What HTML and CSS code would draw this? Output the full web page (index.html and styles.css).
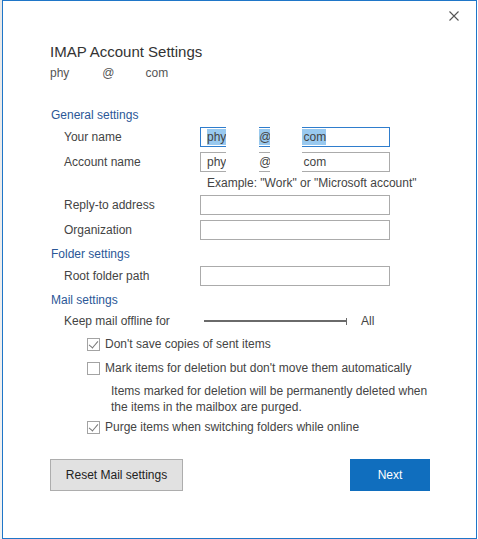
FILE: index.html
```html
<!DOCTYPE html>
<html lang="en">
<head>
<meta charset="utf-8">
<title>IMAP Account Settings</title>
<link rel="stylesheet" href="styles.css">
</head>
<body>
<div class="screen">
  <div class="behind"></div>
  <div class="dialog">
    <div class="titlebar">
      <svg class="close" width="10" height="10" viewBox="0 0 10 10" aria-label="Close">
        <path d="M0.5 0.5 L9.5 9.5 M9.5 0.5 L0.5 9.5" stroke="#555" stroke-width="1.1" fill="none"/>
      </svg>
    </div>
    <h1 class="title">IMAP Account Settings</h1>
    <div class="account"><span>phy</span><span class="at">@</span><span class="dom">com</span></div>

    <h2 class="section s-general">General settings</h2>
    <div class="form">
      <label class="lbl">Your name</label>
      <div class="field focused">
        <span class="sel">phy<span class="gap1"></span>@<span class="gap2"></span>com</span>
        <span class="redact r1"></span><span class="redact r2"></span>
      </div>
      <label class="lbl">Account name</label>
      <div class="field">
        <span class="val">phy<span class="gap1"></span>@<span class="gap2"></span>com</span>
        <span class="redact r1"></span><span class="redact r2"></span>
      </div>
      <div class="hint">Example: "Work" or "Microsoft account"</div>
      <label class="lbl">Reply-to address</label>
      <div class="field"></div>
      <label class="lbl">Organization</label>
      <div class="field"></div>
    </div>

    <h2 class="section s-folder">Folder settings</h2>
    <div class="form">
      <label class="lbl">Root folder path</label>
      <div class="field"></div>
    </div>

    <h2 class="section s-mail">Mail settings</h2>
    <div class="offline">
      <span class="lbl">Keep mail offline for</span>
      <span class="slider"><span class="track"></span><span class="tick"></span></span>
      <span class="all">All</span>
    </div>

    <div class="check c1"><span class="box checked"></span><span>Don't save copies of sent items</span></div>
    <div class="check c2"><span class="box"></span><span>Mark items for deletion but don't move them automatically</span></div>
    <p class="note">Items marked for deletion will be permanently deleted when<br>the items in the mailbox are purged.</p>
    <div class="check c3"><span class="box checked"></span><span>Purge items when switching folders while online</span></div>

    <div class="buttons">
      <button class="btn reset">Reset Mail settings</button>
      <button class="btn next">Next</button>
    </div>
  </div>
</div>
</body>
</html>
```
FILE: styles.css
```css
* { box-sizing: border-box; }
html, body { margin: 0; padding: 0; background: #fff; }
body {
  font-family: "Liberation Sans", Arial, sans-serif;
  font-size: 12px;
  color: #444;
}
.screen { display: flex; width: 478px; height: 539px; overflow: hidden; }
.behind {
  width: 2px;
  flex: none;
  background: linear-gradient(#e8e8e8, #f2f2f2);
}
.dialog {
  width: 475px;
  height: 539px;
  flex: none;
  border: 1px solid #1f76c8;
  padding: 0 0 0 47px;
  background: #fff;
  display: flex;
  flex-direction: column;
}
.titlebar {
  height: 0;
  position: relative;
}
.close { position: absolute; left: 399px; top: 10px; }

.title {
  margin: 41px 0 0;
  font-size: 15px;
  line-height: 19px;
  font-weight: normal;
  color: #333;
}
.account {
  margin-top: 4px;
  line-height: 16px;
  color: #555;
}
.account .at { margin-left: 33px; }
.account .dom { margin-left: 31px; }

.section {
  margin: 0;
  font-size: 12px;
  line-height: 16px;
  font-weight: normal;
  color: #2b5797;
  padding-left: 1px;
}
.s-general { margin-top: 26px; }
.s-folder { margin-top: 6px; }
.s-mail { margin-top: 6px; }

.form {
  display: grid;
  grid-template-columns: 136px 190px;
  row-gap: 5px;
  margin-left: 14px;
  margin-top: 4px;
  align-items: center;
}
.lbl { line-height: 16px; color: #444; }
.field {
  position: relative;
  height: 20px;
  border: 1px solid #ababab;
  padding: 0 0 0 6px;
  line-height: 18px;
  white-space: nowrap;
  color: #444;
}
.field.focused { border-color: #2f7dcd; }
.sel { background: #99c9ef; padding: 1px 0; color: #444; }
.gap1 { display: inline-block; width: 33px; }
.gap2 { display: inline-block; width: 32px; }
.redact {
  position: absolute;
  top: -1px;
  height: 20px;
  background: #fff;
}
.r1 { left: 25px; width: 33px; }
.r2 { left: 69px; width: 32px; }
.hint {
  grid-column: 2 / 3;
  margin: -2px -60px -1px 0;
  padding-left: 7px;
  line-height: 16px;
  color: #444;
  white-space: nowrap;
}

.offline {
  display: flex;
  align-items: center;
  margin: 5px 0 0 14px;
  height: 16px;
}
.offline .lbl { width: 140px; }
.slider { position: relative; display: flex; align-items: center; width: 143px; height: 8px; }
.track { width: 142px; height: 2px; background: #6a6a6a; }
.tick { width: 1px; height: 7px; background: #6a6a6a; }
.all { margin-left: 14px; }

.check {
  display: flex;
  align-items: center;
  margin-left: 37px;
  line-height: 16px;
}
.c1 { margin-top: 7px; }
.c2 { margin-top: 8px; }
.c3 { margin-top: 4px; }
.box {
  width: 13px;
  height: 13px;
  border: 1px solid #a3a3a3;
  margin-right: 5px;
  position: relative;
  flex: none;
}
.box.checked::after {
  content: "";
  position: absolute;
  left: 3px;
  top: 0px;
  width: 4px;
  height: 8px;
  border-right: 1.3px solid #777;
  border-bottom: 1.3px solid #777;
  transform: rotate(40deg);
}
.note {
  margin: 7px 0 0 61px;
  line-height: 16px;
  color: #444;
}

.buttons {
  display: flex;
  justify-content: space-between;
  width: 380px;
  margin-top: 24px;
}
.btn {
  font-family: inherit;
  font-size: 12px;
  height: 32px;
  padding: 0;
  cursor: pointer;
}
.reset {
  width: 133px;
  background: #e1e1e1;
  border: 1px solid #adadad;
  color: #222;
}
.next {
  width: 80px;
  background: #106ebe;
  border: 1px solid #106ebe;
  color: #fff;
}
```
